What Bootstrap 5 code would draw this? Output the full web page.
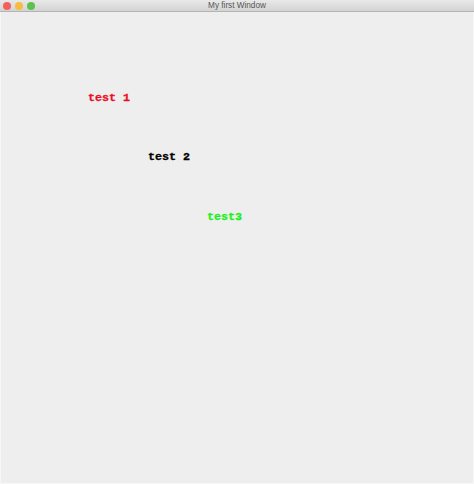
<!DOCTYPE html>
<html lang="en">
<head>
<meta charset="utf-8">
<title>My first Window</title>
<link href="https://cdn.jsdelivr.net/npm/bootstrap@5.3.0/dist/css/bootstrap.min.css" rel="stylesheet">
<style>
html, body { height: 100%; margin: 0; background: #f6f6f6; }
.app-window { height: 484px; width: 474px; padding: 0 1px 1px 1px; background: #f7f7f7; }
.title-bar { height: 12px; background: linear-gradient(#e9e9e9, #d3d3d3); border-bottom: 1px solid #b4b4b4; margin: 0 -1px; padding-left: 3px; }
.win-dot { width: 8px; height: 8px; border-radius: 50%; flex: none; }
.dot-close { background: #f1605c; }
.dot-min { background: #f7bd3f; }
.dot-max { background: #5ec14f; }
.title-text { font: 8.2px/11px "Liberation Sans", sans-serif; color: #555; left: 0; right: 0; top: 0; }
.canvas-area { background: #eeeeee; }
.test-label { font: bold 11.7px/14px "Liberation Mono", monospace; white-space: pre; -webkit-text-stroke: 0.3px currentColor; }
.t1 { left: 87px; top: 79px; color: #ec1027; }
.t2 { left: 147px; top: 138px; color: #000; }
.t3 { left: 206px; top: 198px; color: #1df01f; }
</style>
</head>
<body>
<div class="app-window d-flex flex-column">
  <div class="title-bar position-relative d-flex align-items-center gap-1 flex-shrink-0">
    <span class="win-dot dot-close"></span>
    <span class="win-dot dot-min"></span>
    <span class="win-dot dot-max"></span>
    <div class="title-text position-absolute text-center">My first Window</div>
  </div>
  <div class="canvas-area position-relative flex-grow-1">
    <span class="test-label position-absolute t1">test 1</span>
    <span class="test-label position-absolute t2">test 2</span>
    <span class="test-label position-absolute t3">test3</span>
  </div>
</div>
<script src="https://cdn.jsdelivr.net/npm/bootstrap@5.3.0/dist/js/bootstrap.bundle.min.js"></script>
</body>
</html>
